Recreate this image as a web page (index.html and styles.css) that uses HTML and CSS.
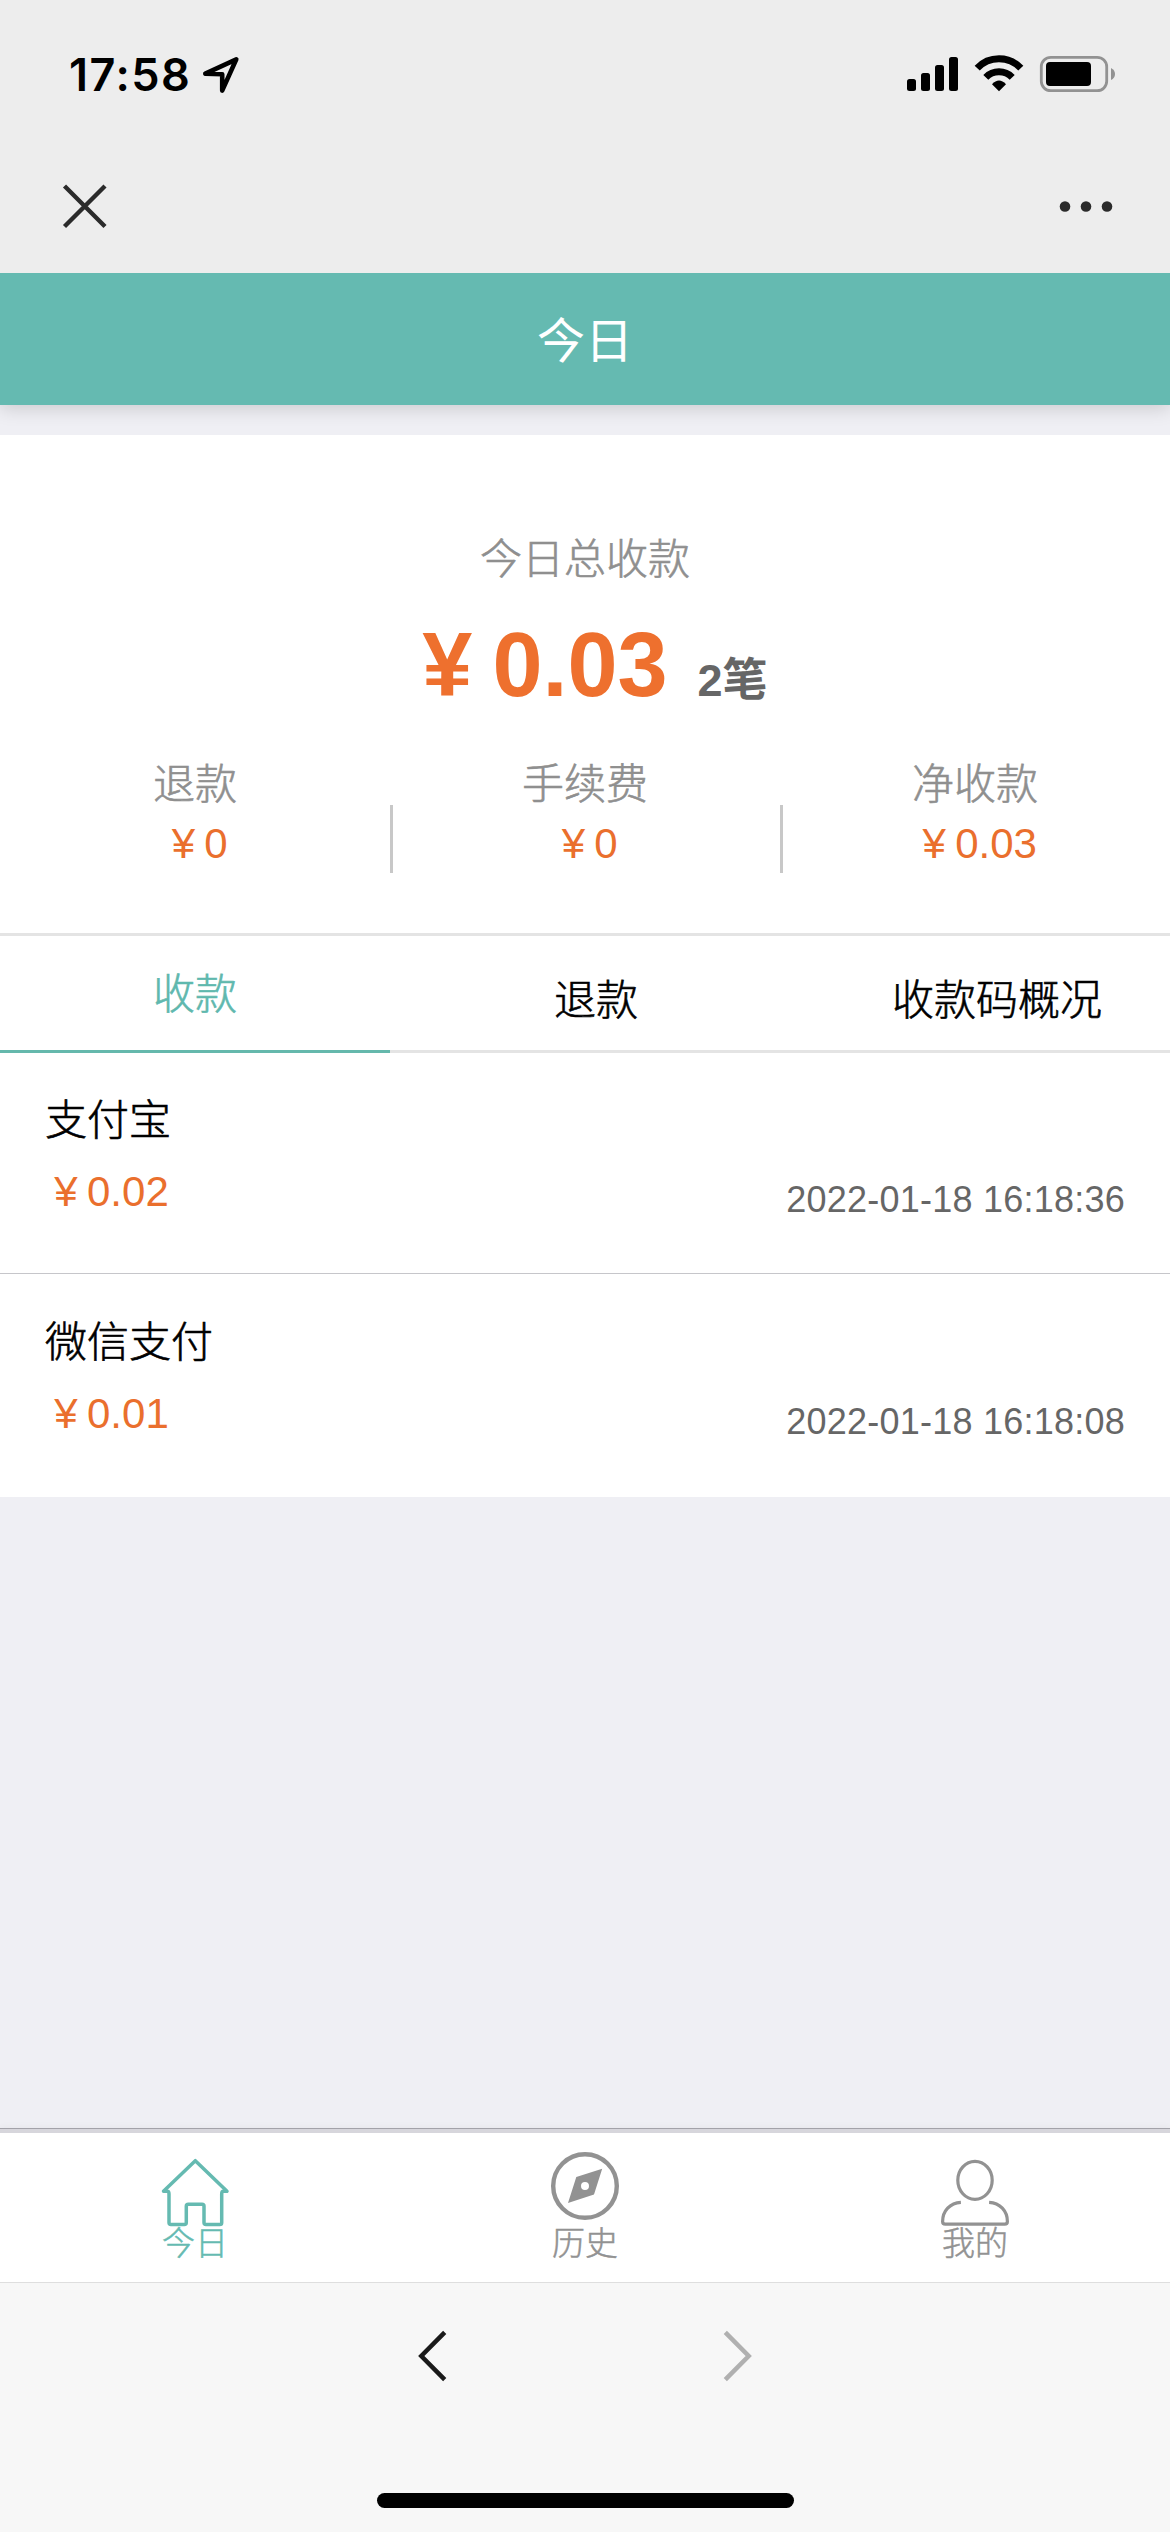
FILE: index.html
```html
<!DOCTYPE html>
<html lang="zh-CN">
<head>
<meta charset="utf-8">
<title>今日</title>
<link rel="stylesheet" href="styles.css">
</head>
<body>
<div class="screen">
  <header class="chrome">
    <div class="status">
      <span class="time">17:58</span>
      <svg class="locate" width="40" height="40" viewBox="200 55 40 40"><path d="M236.3 59.3 205.3 73.7 222.2 74.2 222.2 90.6Z" fill="none" stroke="#000" stroke-width="4.6" stroke-linejoin="round"/></svg>
      <svg class="signals" width="212" height="40" viewBox="905 55 212 40">
        <rect x="907" y="79" width="9" height="12" rx="2.5"/><rect x="921" y="73" width="9" height="18" rx="2.5"/><rect x="935" y="65" width="9" height="26" rx="2.5"/><rect x="949" y="57" width="9" height="34" rx="2.5"/>
        <path d="M977.2 68.2A30 30 0 0 1 1020.8 68.2M985.8 77.4A18.5 18.5 0 0 1 1012.2 77.4" fill="none" stroke="#000" stroke-width="7"/>
        <path d="M992 84.3Q999 76.8 1006 84.3L999 91.2Z"/>
        <rect x="1041.3" y="57.3" width="65.4" height="33.4" rx="9.5" fill="none" stroke="#929292" stroke-width="2.8"/>
        <rect x="1046" y="62" width="45" height="24" rx="4"/>
        <path d="M1111 68Q1115 70 1115 74T1111 80Z" fill="#929292"/>
      </svg>
    </div>
    <div class="nav">
      <svg width="46" height="46" viewBox="0 0 46 46"><path d="M2.500 3 43 43.500M43 3 2.500 43.500" stroke="#2b2b2b" stroke-width="4.4"/></svg>
      <svg width="54" height="12" viewBox="0 0 54 12" fill="#2b2b2b"><circle cx="6" cy="6.500" r="5.3"/><circle cx="27" cy="6.500" r="5.3"/><circle cx="48" cy="6.500" r="5.3"/></svg>
    </div>
  </header>
  <h1 class="title">今日</h1>

  <main class="content">
    <section class="summary">
      <div class="label">今日总收款</div>
      <div class="total"><span class="sum"><i class="yen">¥</i>0.03</span><span class="count">2笔</span></div>
      <div class="stats">
        <div class="stat"><div class="label">退款</div><div class="money"><i class="yen">¥</i>0</div></div>
        <div class="rule"></div>
        <div class="stat"><div class="label">手续费</div><div class="money"><i class="yen">¥</i>0</div></div>
        <div class="rule"></div>
        <div class="stat"><div class="label">净收款</div><div class="money"><i class="yen">¥</i>0.03</div></div>
      </div>
    </section>
    <nav class="tabs">
      <div class="tab active">收款</div>
      <div class="tab">退款</div>
      <div class="tab wide">收款码概况</div>
    </nav>
    <ul class="records">
      <li class="record">
        <div><div class="name">支付宝</div><div class="money"><i class="yen">¥</i>0.02</div></div>
        <time class="date">2022-01-18 16:18:36</time>
      </li>
      <li class="record">
        <div><div class="name">微信支付</div><div class="money"><i class="yen">¥</i>0.01</div></div>
        <time class="date">2022-01-18 16:18:08</time>
      </li>
    </ul>
  </main>

  <nav class="tabbar">
    <div class="item current">
      <svg width="70" height="78" viewBox="0 0 70 78" fill="none" stroke="currentColor" stroke-width="3.5" stroke-linejoin="round"><path d="M35.3 10.7 67 41.3H63.5Q61.7 41.3 61.7 44V72.700Q61.700 74.500 59.700 74.500H46Q44 74.500 44 72.500V56.300Q44 54.300 42 54.300H28.300Q26.300 54.300 26.300 56.300V72.500Q26.300 74.500 24.300 74.500H11Q9 74.500 9 72.500V44Q9 41.300 7 41.300H3.500Z"/></svg>
      <span>今日</span>
    </div>
    <div class="item">
      <svg width="70" height="78" viewBox="0 0 70 78"><circle cx="35" cy="36" r="31.8" fill="none" stroke="currentColor" stroke-width="4.4"/><path fill="currentColor" fill-rule="evenodd" d="M52.200 18.800 44 44.500 18 53 26.300 27ZM35 32a4 4 0 1 0 0 8a4 4 0 1 0 0-8Z"/></svg>
      <span>历史</span>
    </div>
    <div class="item">
      <svg width="70" height="78" viewBox="0 0 70 78" fill="none" stroke="currentColor" stroke-width="3.2"><ellipse cx="35" cy="30.300" rx="17.200" ry="19"/><path d="M20.900 52.300C10 52.800 2.600 61 2.600 71.500Q2.600 74.200 5.300 74.200H64.700Q67.400 74.200 67.400 71.500C67.400 61 60 52.800 49.100 52.300"/></svg>
      <span>我的</span>
    </div>
  </nav>

  <footer class="browser">
    <div class="arrows">
      <svg width="30" height="56" viewBox="0 0 30 56"><path d="M26.700 4.300 3.300 28 26.700 51.700" fill="none" stroke="#1a1a1a" stroke-width="4.500"/></svg>
      <svg width="30" height="56" viewBox="0 0 30 56"><path d="M3.300 4.300 26.700 28 3.300 51.700" fill="none" stroke="#b0b0b0" stroke-width="4.500"/></svg>
    </div>
    <div class="home"></div>
  </footer>
</div>
</body>
</html>
```
FILE: styles.css
```css
* { box-sizing: border-box; }
body, h1, ul { margin: 0; padding: 0; }
body {
  font-family: "Liberation Sans", "Noto Sans CJK SC", sans-serif;
  font-size: 42px;
  color: #000;
  background: #efeff4;
}
svg { display: block; flex: none; }
.screen { width: 1170px; height: 2532px; display: flex; flex-direction: column; overflow: hidden; }

.chrome { position: relative; z-index: 1; height: 273px; background: #ededed; }
.status { height: 150px; display: flex; align-items: center; padding: 0 53px 0 69px; }
.time { width: 131px; font: 600 45px/60px Inter, sans-serif; letter-spacing: 1.5px; white-space: nowrap; }
.signals { margin-left: auto; }
.nav { height: 112px; display: flex; align-items: center; justify-content: space-between; padding: 0 57px 0 62px; }

.title {
  height: 132px;
  font: 400 48px/128px "Noto Sans CJK SC", sans-serif;
  text-align: center;
  color: #fff;
  background: #65bab1;
  box-shadow: 0 3px 18px rgba(0, 0, 0, 0.16);
}

.content { flex: 1; padding-top: 30px; }
.summary { height: 498px; padding-top: 91px; background: #fff; text-align: center; }
.label, .name, .tab { font-family: "Noto Sans CJK SC", sans-serif; font-weight: 300; line-height: 60px; -webkit-text-stroke: 0.6px currentColor; }
.label { color: #8f8f8f; }
.yen { display: inline-block; width: 1em; text-align: center; font-style: normal; }
.total { display: flex; justify-content: center; align-items: baseline; gap: 30px; height: 100px; margin-top: 29px; font-weight: 700; }
.sum { font-size: 90px; line-height: 100px; color: #ee702e; }
.count { font-size: 45px; line-height: 50px; color: #666; }
.stats { display: flex; margin-top: 36px; }
.stat { width: 390px; }
.rule { width: 3px; height: 68px; margin: 54px -3px 0 0; background: #c8c8c8; }
.money { color: #ea6f2d; line-height: 65px; }

.tabs { display: grid; grid-template-columns: repeat(3, 390px); height: 120px; background: #fff; border-top: 3px solid #e4e4e4; }
.tab { padding: 31px 0 0 22px; text-align: center; border-bottom: 3px solid #e4e4e4; }
.tab.wide { padding-left: 44px; }
.tab.active { padding: 25px 0 0; color: #5fb8ae; border-color: #65b8ac; }

.records { list-style: none; background: #fff; }
.record { height: 222px; display: flex; justify-content: space-between; padding: 34px 45px 0; }
.record:first-child { border-bottom: 1px solid #c6c6ca; height: 221px; margin-bottom: 1px; }
.record .money { margin-top: 12px; }
.date { margin-top: 93px; font-size: 36px; line-height: 40px; letter-spacing: 0.24px; color: #666; }

.tabbar {
  height: 154px;
  display: grid;
  grid-template-columns: repeat(3, 390px);
  background: #fff;
  border-top: 4px solid #d7d6dc;
  border-bottom: 1px solid #dedede;
  box-shadow: 0 -1px 0 #a3a2a9, 0 -3px 6px rgba(0, 0, 0, 0.03);
}
.item { display: flex; flex-direction: column; align-items: center; padding-top: 17px; color: #929292; }
.item.current { color: #65bab1; }
.item span { margin-top: -7px; font: 300 33px/40px "Noto Sans CJK SC", sans-serif; -webkit-text-stroke: 0.5px currentColor; }

.browser { height: 249px; background: #f7f7f7; display: flex; flex-direction: column; align-items: center; padding-top: 45px; }
.arrows { width: 334px; display: flex; justify-content: space-between; }
.home { width: 417px; height: 15px; margin-top: 109px; border-radius: 8px; background: #000; }
```
